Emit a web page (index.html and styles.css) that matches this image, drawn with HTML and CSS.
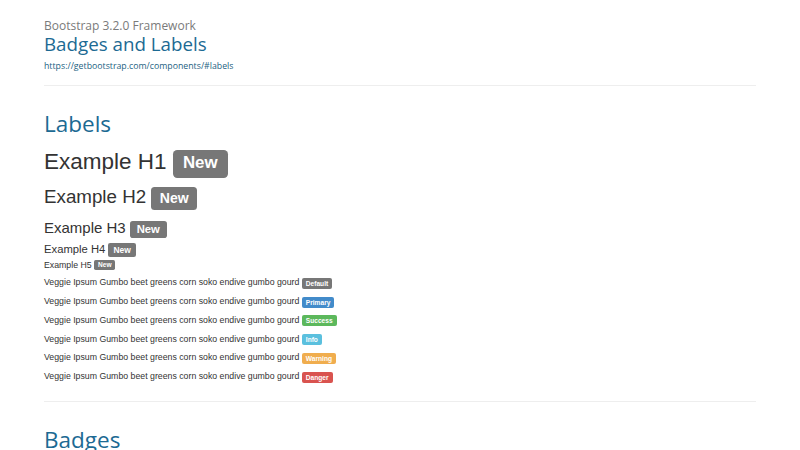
FILE: index.html
```html
<!DOCTYPE html>
<html>
<head>
<meta charset="utf-8">
<link rel="stylesheet" href="styles.css">
</head>
<body>
<div class="container">
  <div class="header">
    <div class="subtitle">Bootstrap 3.2.0 Framework</div>
    <div class="title">Badges and Labels</div>
    <a class="link" href="#">https://getbootstrap.com/components/#labels</a>
  </div>
  <hr class="rule">
  <h2 class="section">Labels</h2>
  <h1 class="ex h1">Example H1 <span class="label label-default">New</span></h1>
  <h2 class="ex h2">Example H2 <span class="label label-default">New</span></h2>
  <h3 class="ex h3">Example H3 <span class="label label-default">New</span></h3>
  <h4 class="ex h4">Example H4 <span class="label label-default">New</span></h4>
  <h5 class="ex h5">Example H5 <span class="label label-default">New</span></h5>
  <p class="text">Veggie Ipsum Gumbo beet greens corn soko endive gumbo gourd <span class="label label-default">Default</span></p>
  <p class="text">Veggie Ipsum Gumbo beet greens corn soko endive gumbo gourd <span class="label label-primary">Primary</span></p>
  <p class="text">Veggie Ipsum Gumbo beet greens corn soko endive gumbo gourd <span class="label label-success">Success</span></p>
  <p class="text">Veggie Ipsum Gumbo beet greens corn soko endive gumbo gourd <span class="label label-info">Info</span></p>
  <p class="text">Veggie Ipsum Gumbo beet greens corn soko endive gumbo gourd <span class="label label-warning">Warning</span></p>
  <p class="text">Veggie Ipsum Gumbo beet greens corn soko endive gumbo gourd <span class="label label-danger">Danger</span></p>
  <hr class="rule rule-bottom">
  <h2 class="section">Badges</h2>
</div>
</body>
</html>
```
FILE: styles.css
```css
html, body {
  margin: 0;
  padding: 0;
  background: #fff;
}
body {
  font-family: "Liberation Sans", Arial, sans-serif;
  color: #333;
  font-size: 8.75px;
  line-height: 1.43;
  overflow: hidden;
}
.container {
  padding: 0 44px;
}
.header {
  padding-top: 19px;
  font-family: "Open Sans", sans-serif;
}
.subtitle {
  font-size: 12px;
  line-height: 14px;
  color: #7a7a7a;
}
.title {
  font-size: 18.75px;
  line-height: 22px;
  color: #1c6a93;
}
.link {
  display: block;
  margin-top: 5px;
  font-size: 8.75px;
  line-height: 12px;
  color: #1d5f82;
  text-decoration: none;
}
.rule {
  border: 0;
  border-top: 1px solid #eeeeee;
  margin: 13px 0 0;
  height: 0;
}
.rule-bottom {
  margin-top: 18.75px;
}
.section {
  font-family: "Open Sans", sans-serif;
  font-weight: 400;
  font-size: 22.5px;
  line-height: 26px;
  color: #1c6a93;
  margin: 25px 0 0;
}
.ex {
  font-family: "Liberation Sans", Arial, sans-serif;
  font-weight: 400;
  line-height: 1.1;
  color: #333;
}
.h1 { font-size: 22.5px; margin: 12.5px 0 6.25px; }
.h2 { font-size: 18.75px; margin: 12.5px 0 6.25px; }
.h3 { font-size: 15px; margin: 12.5px 0 6.25px; }
.h4 { font-size: 11.25px; margin: 5.5px 0 5.5px; }
.h5 { font-size: 8.75px; margin: 5.5px 0 6.25px; }
.text {
  margin: 0 0 6.25px;
  line-height: 12.5px;
}
.label {
  display: inline;
  padding: .2em .6em .3em;
  font-size: 75%;
  font-weight: 700;
  line-height: 1;
  color: #fff;
  text-align: center;
  white-space: nowrap;
  vertical-align: baseline;
  border-radius: .25em;
}
.text .label {
  font-size: 6.6px;
  padding: 1.5px 4px 2.5px;
  border-radius: 2px;
}
.label-default { background-color: #777777; }
.label-primary { background-color: #428bca; }
.label-success { background-color: #5cb85c; }
.label-info { background-color: #5bc0de; }
.label-warning { background-color: #f0ad4e; }
.label-danger { background-color: #d9534f; }
```
